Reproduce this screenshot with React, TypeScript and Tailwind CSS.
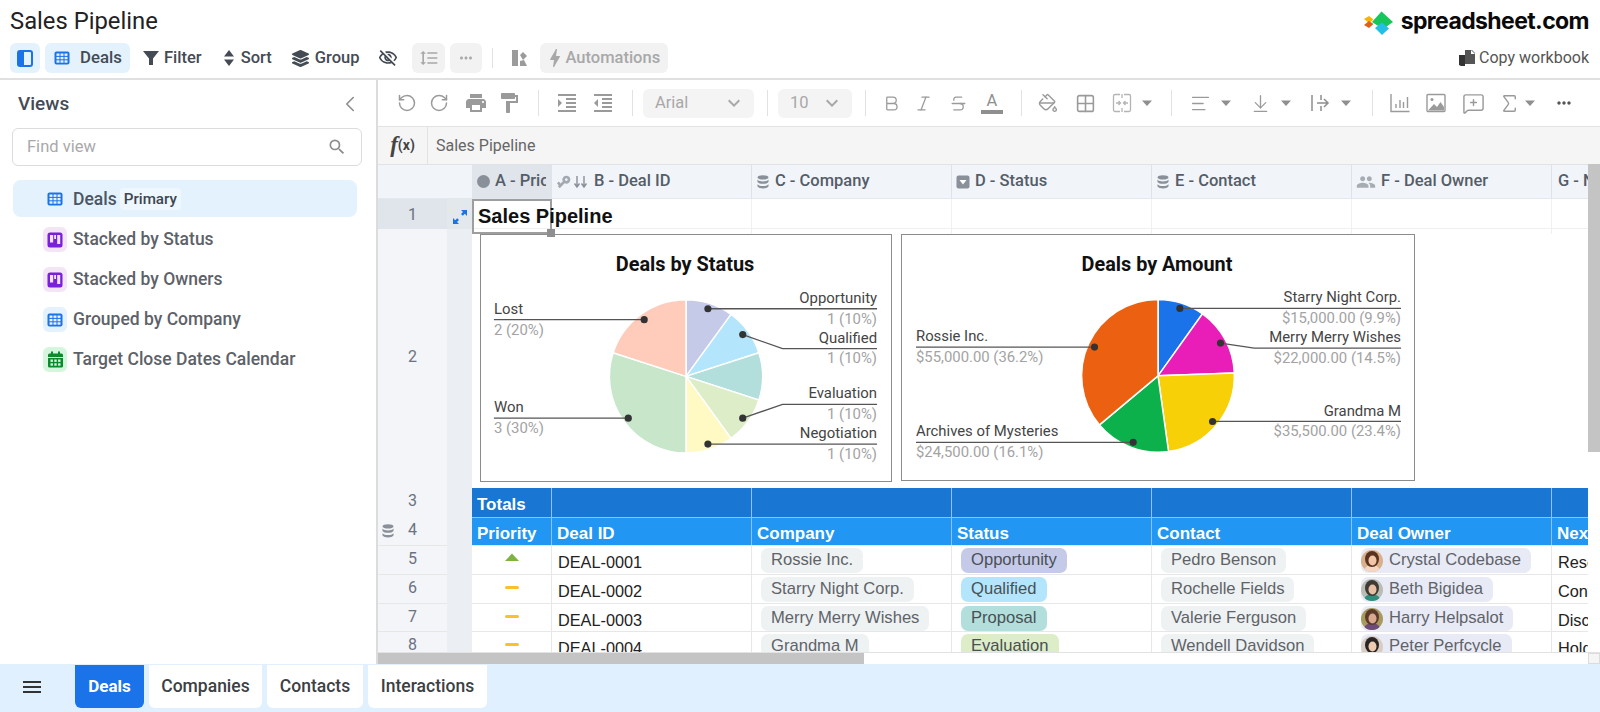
import React from "react";
import {
  MdPrint, MdFormatPaint, MdFormatIndentIncrease, MdFormatIndentDecrease,
  MdMoreHoriz, MdFormatLineSpacing, MdBolt, MdOutlineVisibilityOff, MdSearch,
  MdKeyboardArrowDown, MdMenu, MdVpnKey, MdPeople,
} from "react-icons/md";
import { FaLayerGroup } from "react-icons/fa";
import {
  RotateCcw, RotateCw, Bold, Italic, Strikethrough, PaintBucket, Grid2x2, AlignLeft,
  ArrowDownToLine, MessageSquarePlus, Sigma, ChevronLeft,
} from "lucide-react";

const roboto = "[font-family:Roboto,sans-serif]";
const arial = "[font-family:'Liberation_Sans',Arial,sans-serif]";

function GridGlyph({ color = "#1a73e8", size = 16 }: { color?: string; size?: number }) {
  return (
    <svg width={size} height={size} viewBox="0 0 16 16">
      <rect x="0.5" y="1.5" width="15" height="13" rx="2" fill={color} />
      <g fill="#fff" opacity="0.9">
        <rect x="2.5" y="3.5" width="3" height="2.4" />
        <rect x="6.5" y="3.5" width="3" height="2.4" />
        <rect x="10.5" y="3.5" width="3" height="2.4" />
        <rect x="2.5" y="6.9" width="3" height="2.4" />
        <rect x="6.5" y="6.9" width="3" height="2.4" />
        <rect x="10.5" y="6.9" width="3" height="2.4" />
        <rect x="2.5" y="10.3" width="3" height="2.4" />
        <rect x="6.5" y="10.3" width="3" height="2.4" />
        <rect x="10.5" y="10.3" width="3" height="2.4" />
      </g>
    </svg>
  );
}

function KanbanGlyph() {
  return (
    <svg width="16" height="16" viewBox="0 0 16 16">
      <rect x="0.5" y="0.5" width="15" height="15" rx="2.5" fill="#7b1fd8" />
      <rect x="3" y="3" width="3.2" height="7.5" fill="#f3e5f5" />
      <rect x="7.2" y="3" width="1.8" height="4" fill="#f3e5f5" />
      <rect x="10.2" y="3" width="3" height="9" fill="#f3e5f5" />
    </svg>
  );
}

function CalendarGlyph() {
  return (
    <svg width="17" height="17" viewBox="0 0 17 17">
      <rect x="1" y="2.5" width="15" height="14" rx="1.5" fill="#0b8a2e" />
      <rect x="4" y="0.5" width="2" height="4" fill="#0b8a2e" />
      <rect x="11" y="0.5" width="2" height="4" fill="#0b8a2e" />
      <rect x="1" y="6" width="15" height="1" fill="#c8f5d0" />
      <g fill="#d4f7da">
        <rect x="3.5" y="8.5" width="2.4" height="2.4" />
        <rect x="7.3" y="8.5" width="2.4" height="2.4" />
        <rect x="11.1" y="8.5" width="2.4" height="2.4" />
        <rect x="3.5" y="12.3" width="2.4" height="2.4" />
        <rect x="7.3" y="12.3" width="2.4" height="2.4" />
        <rect x="11.1" y="12.3" width="2.4" height="2.4" />
      </g>
    </svg>
  );
}

function DbGlyph({ className = "" }: { className?: string }) {
  return (
    <svg width="12" height="14" viewBox="0 0 12 14" className={className}>
      <g fill="#8a9099">
        <ellipse cx="6" cy="2.4" rx="5.5" ry="2.2" />
        <path d="M0.5 4.6c1 1.4 3 1.9 5.5 1.9s4.5-.5 5.5-1.9v2.3c-.8 1.3-3 1.9-5.5 1.9S1.3 8.2.5 6.9z" />
        <path d="M0.5 9.2c1 1.3 3 1.8 5.5 1.8s4.5-.5 5.5-1.8v2.4c-.8 1.2-3 1.9-5.5 1.9s-4.7-.7-5.5-1.9z" />
      </g>
    </svg>
  );
}

function Logo() {
  return (
    <svg width="30" height="26" viewBox="0 0 30 26">
      <path d="M8 13 L17.5 2.5 L29 13 L19 20z" fill="#16c65a" />
      <path d="M11 19 L18 13.5 L25 19.5 L18 26z" fill="#25bfe6" />
      <path d="M0 10 L5 7 L9.5 10.5 L5 14z" fill="#f8b400" />
      <path d="M0 16 L5 12 L9.5 15 L5 19z" fill="#e0601a" />
    </svg>
  );
}

const Sep = ({ className }: { className: string }) => <div className={`w-px h-[26px] bg-[#e2e2e2] shrink-0 ${className}`} />;
const Caret = ({ className }: { className: string }) => (
  <svg width="12" height="8" viewBox="0 0 12 8" className={`shrink-0 ${className}`}>
    <path d="M1 1.5h10L6 7z" fill="#8f8f8f" />
  </svg>
);

function Head({ children, className = "" }: { children: React.ReactNode; className?: string }) {
  return (
    <div className={`h-full flex items-center border-r border-[#dde3ea] overflow-hidden whitespace-nowrap text-[#555d68] font-medium text-[16.5px] ${className}`}>
      {children}
    </div>
  );
}

function TableHead() {
  return (
    <div className={`grid grid-cols-[69px_25px_80px_200px_200px_200px_200px_200px_36px] h-[35px] shrink-0 bg-[#f1f5f9] border-b border-[#e3e8ee] border-t border-t-[#dfe3e8] ${roboto}`}>
      <div />
      <div />
      <Head className="bg-[#dfe5ea] pl-[5px]">
        <span className="w-[13px] h-[13px] rounded-full bg-[#8a9099] mr-[5px] shrink-0" />
        <span className="overflow-hidden mr-[5px]">A - Priority</span>
      </Head>
      <Head className="pl-[4px]">
        <MdVpnKey className="text-[#a3a9b0] text-[16px] mr-[1px] rotate-[135deg]" />
        <svg width="16" height="14" viewBox="0 0 16 14" className="mr-[5px]">
          <path d="M4 1v10M1.5 8.5 4 12l2.5-3.5M11 1v10M8.5 8.5 11 12l2.5-3.5" stroke="#8a9099" strokeWidth="1.4" fill="none" />
        </svg>
        B - Deal ID
      </Head>
      <Head className="pl-[5px]"><DbGlyph className="mr-[6px]" />C - Company</Head>
      <Head className="pl-[4px]">
        <svg width="14" height="14" viewBox="0 0 14 14" className="mr-[5px]">
          <rect x="0.5" y="0.5" width="13" height="13" rx="2" fill="#8a9099" />
          <path d="M3.5 5h7L7 9.5z" fill="#fff" />
        </svg>
        D - Status
      </Head>
      <Head className="pl-[5px]"><DbGlyph className="mr-[6px]" />E - Contact</Head>
      <Head className="pl-[4px]"><MdPeople className="text-[#a6acb4] text-[20px] mr-[5px]" />F - Deal Owner</Head>
      <Head className="border-r-0 pl-[6px]">G - Next Step</Head>
    </div>
  );
}

function Pill({ children, className }: { children: React.ReactNode; className: string }) {
  return (
    <span className={`inline-flex h-[25px] mt-[2px] items-center rounded-[7px] px-[10px] whitespace-nowrap text-[16.6px] leading-none text-[#5f6368] ${className}`}>
      {children}
    </span>
  );
}

function Face({ skin, hair, bg, shirt }: { skin: string; hair: string; bg: string; shirt: string }) {
  return (
    <svg width="22" height="22" viewBox="0 0 22 22" className="shrink-0 rounded-full mr-[6px] -ml-[10px]">
      <rect width="22" height="22" fill={bg} />
      <path d="M3 22c0-5 4-7 8-7s8 2 8 7z" fill={shirt} />
      <ellipse cx="11" cy="9" rx="7" ry="8" fill={hair} />
      <ellipse cx="11.5" cy="10.5" rx="4" ry="5" fill={skin} />
    </svg>
  );
}

const rows = [
  { n: 5, deal: "DEAL-0001", company: "Rossie Inc.", status: "Opportunity", sc: "bg-[#c5cae9]", contact: "Pedro Benson", owner: "Crystal Codebase", next: "Research", up: true, face: { skin: "#f1c6a8", hair: "#5a3320", bg: "#d9b08c", shirt: "#f4d7c2" } },
  { n: 6, deal: "DEAL-0002", company: "Starry Night Corp.", status: "Qualified", sc: "bg-[#b3e5fc]", contact: "Rochelle Fields", owner: "Beth Bigidea", next: "Contact", up: false, face: { skin: "#e6bfa5", hair: "#3f3a35", bg: "#b9bdb6", shirt: "#2f8f7f" } },
  { n: 7, deal: "DEAL-0003", company: "Merry Merry Wishes", status: "Proposal", sc: "bg-[#b2dfdb]", contact: "Valerie Ferguson", owner: "Harry Helpsalot", next: "Discuss", up: false, face: { skin: "#d9a890", hair: "#5b3a2b", bg: "#a89a5e", shirt: "#6d4b7b" } },
  { n: 8, deal: "DEAL-0004", company: "Grandma M", status: "Evaluation", sc: "bg-[#dcedc8]", contact: "Wendell Davidson", owner: "Peter Perfcycle", next: "Hold", up: false, face: { skin: "#eccbb0", hair: "#2a2422", bg: "#d8cdc5", shirt: "#333333" } },
];

function Slice({ cx, cy, r, from, to, fill }: { cx: number; cy: number; r: number; from: number; to: number; fill: string }) {
  const p = (f: number) => {
    const a = f * 2 * Math.PI - Math.PI / 2;
    return `${cx + r * Math.cos(a)} ${cy + r * Math.sin(a)}`;
  };
  const large = to - from > 0.5 ? 1 : 0;
  return <path d={`M${cx} ${cy}L${p(from)}A${r} ${r} 0 ${large} 1 ${p(to)}Z`} fill={fill} stroke="#fff" strokeWidth="1.5" />;
}

type Label = { name: string; value: string; x: number; end: boolean; y: number; line: string; dot: [number, number] };

function Pie({ title, viewBox, width, height, cx, slices, labels, titleX }: {
  title: string; viewBox: string; width: number; height: number; cx: number; titleX: number;
  slices: [number, string][]; labels: Label[];
}) {
  let acc = 0;
  return (
    <div className="bg-white border border-[#8c8c8c] shrink-0" style={{ width, height }}>
      <svg width="100%" height="100%" viewBox={viewBox} className={roboto}>
        <text x={titleX} y="270" textAnchor="middle" fontSize="20" fontWeight="700" fill="#111">{title}</text>
        {slices.map(([v, c], i) => {
          const from = acc;
          acc += v;
          return <Slice key={i} cx={cx} cy={376} r={77} from={from} to={acc} fill={c} />;
        })}
        {labels.map((l) => (
          <g key={l.name}>
            <polyline points={l.line} fill="none" stroke="#555" strokeWidth="1.3" />
            <circle cx={l.dot[0]} cy={l.dot[1]} r="3.6" fill="#333" />
            <text x={l.x} y={l.y - 6} textAnchor={l.end ? "end" : "start"} fontSize="15" fill="#444">{l.name}</text>
            <text x={l.x} y={l.y + 15} textAnchor={l.end ? "end" : "start"} fontSize="15" fill="#a3a3a3">{l.value}</text>
          </g>
        ))}
      </svg>
    </div>
  );
}

const statusLabels: Label[] = [
  { name: "Lost", value: "2 (20%)", x: 493, end: false, y: 319, line: "493,319 644,319", dot: [644, 319] },
  { name: "Won", value: "3 (30%)", x: 493, end: false, y: 418, line: "493,418 628,418", dot: [628, 418] },
  { name: "Opportunity", value: "1 (10%)", x: 878, end: true, y: 308, line: "878,308 708,308", dot: [708, 308] },
  { name: "Qualified", value: "1 (10%)", x: 878, end: true, y: 348, line: "878,348 783,348 743,334", dot: [743, 334] },
  { name: "Evaluation", value: "1 (10%)", x: 878, end: true, y: 404, line: "878,404 783,404 743,418", dot: [743, 418] },
  { name: "Negotiation", value: "1 (10%)", x: 878, end: true, y: 444, line: "878,444 708,444", dot: [708, 444] },
];
const amountLabels: Label[] = [
  { name: "Starry Night Corp.", value: "$15,000.00 (9.9%)", x: 1403, end: true, y: 308, line: "1403,308 1180,308", dot: [1180, 308] },
  { name: "Merry Merry Wishes", value: "$22,000.00 (14.5%)", x: 1403, end: true, y: 348, line: "1403,348 1255,348 1221,343", dot: [1221, 343] },
  { name: "Grandma M", value: "$35,500.00 (23.4%)", x: 1403, end: true, y: 422, line: "1403,422 1213,422", dot: [1213, 422] },
  { name: "Rossie Inc.", value: "$55,000.00 (36.2%)", x: 914, end: false, y: 347, line: "914,347 1094,347", dot: [1094, 347] },
  { name: "Archives of Mysteries", value: "$24,500.00 (16.1%)", x: 914, end: false, y: 443, line: "914,443 1133,443", dot: [1133, 443] },
];

const colsClass = "grid grid-cols-[69px_25px_80px_200px_200px_200px_200px_200px_36px] shrink-0";
const numBase = `flex justify-center text-[16px] text-[#6b7280] ${roboto}`;
const numCell = `${numBase} items-start pt-px bg-[#f3f5f8]`;
const gutter = "bg-[#ebeff3]";
const bandCell = "border-r border-[#8ec2f0] h-full";
const blueText = `flex items-center pl-[5px] pt-[5px] overflow-hidden whitespace-nowrap text-white font-bold text-[17px] ${arial}`;

export default function App() {
  return (
    <div className={`w-[1600px] h-[712px] flex flex-col overflow-hidden bg-white ${roboto}`}>
      {/* top bar */}
      <header className="h-[80px] shrink-0 border-b-2 border-[#e0e0e0] flex flex-col">
        <div className="h-[43px] flex items-center justify-between pl-[10px] pr-[11px]">
          <h1 className="text-[23.8px] text-[#222] font-normal leading-none">Sales Pipeline</h1>
          <div className="flex items-center gap-[7px]">
            <Logo />
            <span className="[font-family:Inter,sans-serif] font-bold text-[23px] tracking-[-0.6px] text-[#0a0a0a] leading-none">spreadsheet.com</span>
          </div>
        </div>
        <div className="h-[30px] flex items-center pl-[10px] pr-[11px] text-[16.5px] font-medium text-[#444b55]">
          <button className="w-[30px] h-[30px] rounded-md bg-[#e3f2fd] flex items-center justify-center">
            <svg width="16" height="17" viewBox="0 0 16 17">
              <rect x="1" y="1" width="14" height="15" rx="2" fill="none" stroke="#1a73e8" strokeWidth="2" />
              <rect x="1" y="1" width="6" height="15" rx="1" fill="#1a73e8" />
            </svg>
          </button>
          <button className="w-[85px] h-[30px] ml-[5px] rounded-md bg-[#e3f2fd] flex items-center pl-[9px] gap-[10px] text-[16.8px]">
            <GridGlyph size={16} /> Deals
          </button>
          <svg width="16" height="16" viewBox="0 0 16 16" className="ml-[13px]"><path d="M0 1h16l-6 7.5V15H6V8.5z" fill="#444b55" /></svg>
          <span className="ml-[5px]">Filter</span>
          <svg width="12" height="18" viewBox="0 0 12 18" className="ml-[21px]"><path d="M6 1l5 6.5H1zM6 17l5-6.5H1z" fill="#444b55" /></svg>
          <span className="ml-[6px]">Sort</span>
          <FaLayerGroup className="ml-[20px] text-[17px] text-[#444b55]" />
          <span className="ml-[6px]">Group</span>
          <MdOutlineVisibilityOff className="ml-[19px] text-[20px] text-[#444b55]" />
          <button className="ml-[14px] w-[33px] h-[30px] rounded-md bg-[#f2f2f2] flex items-center justify-center"><MdFormatLineSpacing className="text-[20px] text-[#a8a8a8]" /></button>
          <button className="ml-[5px] w-[32px] h-[30px] rounded-md bg-[#f2f2f2] flex items-center justify-center"><MdMoreHoriz className="text-[18px] text-[#a8a8a8]" /></button>
          <div className="ml-[10px] w-px h-[20px] bg-[#e2e2e2]" />
          <svg width="17" height="18" viewBox="0 0 17 18" className="ml-[18px]">
            <path d="M1 1h6v16H1z" fill="#9b9b9b" />
            <path d="M9 6l3-3 4 4-4 4zM9 17v-5l4-1 3 6z" fill="#9b9b9b" />
          </svg>
          <button className="ml-[12px] w-[128px] h-[30px] rounded-md bg-[#f2f2f2] flex items-center pl-[3px] text-[#a8a8a8] text-[16.5px]">
            <MdBolt className="text-[24px] -mr-[2px]" /> Automations
          </button>
          <div className="ml-auto flex items-center text-[#555] font-normal text-[16px] gap-[3px]">
            <svg width="18" height="18" viewBox="0 0 18 18">
              <path d="M1 6h6v11H3l-2-1z" fill="#333" />
              <path d="M7 1h7l3 3v11H7z" fill="#555" />
              <path d="M13 1v4h4z" fill="#fff" />
            </svg>
            Copy workbook
          </div>
        </div>
      </header>

      <div className="flex-1 min-h-0 flex">
        {/* sidebar */}
        <aside className="w-[376px] shrink-0 flex flex-col">
          <div className="h-[46px] pt-[2px] flex items-center justify-between pl-[18px] pr-[13px]">
            <span className="text-[19px] font-medium text-[#444b55]">Views</span>
            <ChevronLeft size={26} strokeWidth={1.5} className="text-[#8d8d8d]" />
          </div>
          <div className="ml-[12px] mr-[14px] mt-[2px] h-[38px] border border-[#dcdcdc] rounded-md flex items-center justify-between px-[14px] text-[16.5px] text-[#a9a9a9]">
            Find view
            <MdSearch className="text-[20px] text-[#8d8d8d]" />
          </div>
          <nav className="mt-[14px] mx-[13px] flex flex-col gap-[3px] text-[17.5px] font-medium text-[#5d6168]">
            <div className="h-[37px] w-[344px] rounded-lg bg-[#e3f2fd] flex items-center pl-[30px] pt-px mb-px">
              <span className="w-[24px] flex justify-center mr-[6px]"><GridGlyph /></span>
              <span className="text-[#4b5563]">Deals</span>
              <span className="ml-[3px] px-[4px] h-[22px] rounded bg-[#eef7fe] flex items-center text-[15.2px] text-[#3d4550]">Primary</span>
            </div>
            {[
              { t: "Stacked by Status", bg: "bg-[#f3e5f5]", g: <KanbanGlyph /> },
              { t: "Stacked by Owners", bg: "bg-[#f3e5f5]", g: <KanbanGlyph /> },
              { t: "Grouped by Company", bg: "bg-[#e3f2fd]", g: <GridGlyph /> },
              { t: "Target Close Dates Calendar", bg: "bg-[#d5f5dc]", g: <CalendarGlyph /> },
            ].map((v) => (
              <div key={v.t} className="h-[37px] flex items-center pl-[30px]">
                <span className={`w-[24px] h-[25px] rounded-md flex items-center justify-center mr-[6px] ${v.bg}`}>{v.g}</span>
                {v.t}
              </div>
            ))}
          </nav>
        </aside>

        {/* sheet */}
        <main className="flex-1 min-w-0 flex flex-col border-l-2 border-[#dcdcdc]">
          <div className="h-[47px] shrink-0 flex items-center border-b border-[#e2e2e2] text-[#9a9a9a] [&>svg]:shrink-0">
            <span className="ml-[17px] w-[24px] flex justify-center"><RotateCcw size={20} strokeWidth={1.8} /></span>
            <span className="ml-[8px] w-[24px] flex justify-center"><RotateCw size={20} strokeWidth={1.8} /></span>
            <MdPrint className="ml-[13px] text-[24px]" />
            <MdFormatPaint className="ml-[9px] text-[24px]" />
            <Sep className="ml-[17px]" />
            <MdFormatIndentIncrease className="ml-[16px] text-[24px]" />
            <MdFormatIndentDecrease className="ml-[12px] text-[24px]" />
            <Sep className="ml-[17px]" />
            <div className="ml-[10px] w-[111px] h-[29px] rounded-md bg-[#f4f4f4] flex items-center justify-between pl-[12px] pr-[8px] text-[#a8a8a8] text-[16.5px]">
              Arial <MdKeyboardArrowDown className="text-[24px]" />
            </div>
            <Sep className="ml-[13px]" />
            <div className="ml-[10px] w-[74px] h-[29px] rounded-md bg-[#f4f4f4] flex items-center justify-between pl-[12px] pr-[8px] text-[#a8a8a8] text-[16.5px]">
              10 <MdKeyboardArrowDown className="text-[24px]" />
            </div>
            <Sep className="ml-[13px]" />
            <span className="ml-[13px] w-[24px] flex justify-center"><Bold size={19} strokeWidth={1.6} /></span>
            <span className="ml-[8px] w-[24px] flex justify-center"><Italic size={19} strokeWidth={1.6} /></span>
            <span className="ml-[11px] w-[24px] flex justify-center"><Strikethrough size={19} strokeWidth={1.6} /></span>
            <span className="ml-[10px] w-[24px] flex flex-col items-center text-[16.5px] leading-[18px] text-[#8f8f8f]">
              A
              <span className="w-[22px] h-[4px] bg-[#8f8f8f]" />
            </span>
            <Sep className="ml-[17px]" />
            <span className="ml-[14px] w-[24px] flex justify-center"><PaintBucket size={20} strokeWidth={1.7} /></span>
            <span className="ml-[13px] w-[24px] flex justify-center"><Grid2x2 size={21} strokeWidth={1.8} /></span>
            <svg width="24" height="24" viewBox="0 0 24 24" className="ml-[13px]" fill="none" stroke="#b4b4b4" strokeWidth="1.3">
              <path d="M10 3.5H5a1.5 1.5 0 0 0-1.5 1.5v14A1.5 1.5 0 0 0 5 20.5h5M14 3.5h5A1.5 1.5 0 0 1 20.5 5v14a1.5 1.5 0 0 1-1.5 1.5h-5M12 3v4M12 17v4M6 12h4.5M8.5 10l2 2-2 2M18 12h-4.5M15.5 10l-2 2 2 2" />
            </svg>
            <Caret className="ml-[7px]" />
            <Sep className="ml-[18px]" />
            <span className="ml-[16px] w-[24px] flex justify-center"><AlignLeft size={21} strokeWidth={1.5} /></span>
            <Caret className="ml-[8px]" />
            <span className="ml-[16px] w-[24px] flex justify-center"><ArrowDownToLine size={21} strokeWidth={1.5} /></span>
            <Caret className="ml-[8px]" />
            <svg width="24" height="24" viewBox="0 0 24 24" className="ml-[16px]" fill="none" stroke="#8f8f8f" strokeWidth="1.5">
              <path d="M4 4v16M9 12h11M16 8l4 4-4 4M13 4v5M13 15v5" />
            </svg>
            <Caret className="ml-[8px]" />
            <Sep className="ml-[20px]" />
            <svg width="24" height="24" viewBox="0 0 24 24" className="ml-[15px]" fill="none" stroke="#9a9a9a" strokeWidth="1.4">
              <path d="M3 3v17.5h18.5M8 17v-4M12 17V9M15.5 17v-6M19.5 17V6" />
            </svg>
            <svg width="24" height="24" viewBox="0 0 24 24" className="ml-[12px]">
              <rect x="3" y="3.5" width="18" height="17" rx="1" fill="none" stroke="#9a9a9a" strokeWidth="1.4" />
              <circle cx="8" cy="8.5" r="1.5" fill="#9a9a9a" />
              <path d="M4 19.5 10 13l3 3 3.5-5 3.5 5v3.5z" fill="#9a9a9a" />
            </svg>
            <span className="ml-[13px] w-[24px] flex justify-center"><MessageSquarePlus size={23} strokeWidth={1.5} /></span>
            <span className="ml-[12px] w-[24px] flex justify-center"><Sigma size={23} strokeWidth={1.5} /></span>
            <Caret className="ml-[3px]" />
            <MdMoreHoriz className="ml-[18px] text-[20px] text-[#555]" />
          </div>

          <div className="h-[37px] shrink-0 flex items-center bg-[#f5f5f5]">
            <div className="w-[50px] h-full flex items-center justify-center border-r border-[#e2e2e2] [font-family:'Liberation_Serif',serif] italic font-bold text-[23px] text-[#444]">
              f<span className="[font-family:Roboto,sans-serif] not-italic text-[14px]">(x)</span>
            </div>
            <span className="ml-[8px] text-[16px] text-[#666]">Sales Pipeline</span>
          </div>

          <div className="flex-1 min-h-0 flex">
            <div className="w-[1210px] flex flex-col overflow-hidden">
              <TableHead />
              {/* row 1 */}
              <div className={`${colsClass} h-[30px] border-b border-[#f0f0f0]`}>
                <div className={`${numBase} items-center pb-[3px] bg-[#dfe5ea]`}>1</div>
                <div className="bg-[#e3e8ec] flex items-center justify-center">
                  <svg width="16" height="16" viewBox="0 0 16 16" fill="#1a73e8">
                    <path d="M9 1h6v6l-2.2-2.2-2 2L9 5l2-2zM7 15H1V9l2.2 2.2 2-2L7 11l-2 2z" />
                  </svg>
                </div>
                <div className={`relative border-2 border-[#9e9e9e] whitespace-nowrap pl-[4px] pb-px flex items-center font-bold text-[20px] text-[#111] ${arial}`}>
                  Sales Pipeline
                  <span className="absolute -right-[5px] -bottom-[5px] w-[8px] h-[8px] bg-[#8f8f8f]" />
                </div>
                <div className="border-r border-[#f0f0f0]" />
                <div className="border-r border-[#f0f0f0]" />
                <div className="border-r border-[#f0f0f0]" />
                <div className="border-r border-[#f0f0f0]" />
                <div className="border-r border-[#f0f0f0]" />
                <div />
              </div>
              {/* row 2 */}
              <div className={`${colsClass} h-[259px]`}>
                <div className={`${numBase} items-center pb-[4px] bg-[#f3f5f8]`}>2</div>
                <div className={gutter} />
                <div className="col-span-7 flex gap-[9px] pl-[8px] pt-[5px]">
                  <Pie
                    title="Deals by Status" viewBox="480 234 412 247" width={412} height={248} cx={686} titleX={685}
                    slices={[[0.1, "#c5cae9"], [0.1, "#b3e5fc"], [0.1, "#b2dfdb"], [0.1, "#dcedc8"], [0.1, "#fff9c4"], [0.3, "#c8e6c9"], [0.2, "#ffccbc"]]}
                    labels={statusLabels}
                  />
                  <Pie
                    title="Deals by Amount" viewBox="901 234 514 247" width={514} height={247} cx={1158} titleX={1157}
                    slices={[[0.099, "#1a73e8"], [0.145, "#e91eb8"], [0.234, "#f7d008"], [0.161, "#0db14b"], [0.361, "#ec6111"]]}
                    labels={amountLabels}
                  />
                </div>
              </div>
              {/* row 3 */}
              <div className={`${colsClass} h-[29px]`}>
                <div className={numCell}>3</div>
                <div className={gutter} />
                <div className={`${bandCell} bg-[#1976d2] ${blueText}`}>Totals</div>
                {[0, 1, 2, 3, 4].map((i) => <div key={i} className={`${bandCell} bg-[#1976d2]`} />)}
                <div className="bg-[#1976d2]" />
              </div>
              {/* row 4 */}
              <div className={`${colsClass} h-[28px]`}>
                <div className={`${numCell} relative`}>
                  <DbGlyph className="absolute left-[4px] top-[7px]" />
                  4
                </div>
                <div className={gutter} />
                {["Priority", "Deal ID", "Company", "Status", "Contact", "Deal Owner", "Next Step"].map((h, i) => (
                  <div key={h} className={`bg-[#2196f3] border-t border-[#8ec2f0] ${blueText} ${i < 6 ? "border-r" : ""}`}>{h}</div>
                ))}
              </div>
              {/* data rows */}
              {rows.map((r, idx) => (
                <div key={r.n} className={`${colsClass} ${idx === 3 ? "h-[21px]" : idx === 0 ? "h-[29px]" : idx === 1 ? "h-[29px]" : "h-[28px]"} overflow-hidden ${arial}`}>
                  <div className={`${numCell} border-t border-[#e7e7e7]`}>{r.n}</div>
                  <div className={gutter} />
                  <div className="border-t border-r border-[#e7e7e7] flex justify-center pt-[7px]">
                    {r.up ? (
                      <svg width="16" height="8" viewBox="0 0 16 8"><path d="M8 0.5 15 8H1z" fill="#7cb342" /></svg>
                    ) : (
                      <span className="mt-[4px] w-[14px] h-[3px] rounded-sm bg-[#fbc02d]" />
                    )}
                  </div>
                  <div className="border-t border-r border-[#e7e7e7] pl-[6px] pt-[6px] text-[16.3px] leading-[20px] text-[#222]">{r.deal}</div>
                  <div className="border-t border-r border-[#e7e7e7] pl-[9px]"><Pill className="bg-[#eef2f3]">{r.company}</Pill></div>
                  <div className="border-t border-r border-[#e7e7e7] pl-[9px]"><Pill className={`${r.sc} !text-[#4a4f55]`}>{r.status}</Pill></div>
                  <div className="border-t border-r border-[#e7e7e7] pl-[9px]"><Pill className="bg-[#eef2f3]">{r.contact}</Pill></div>
                  <div className="border-t border-r border-[#e7e7e7] pl-[9px]">
                    <Pill className="bg-[#e8eaf6] pr-[10px]"><Face {...r.face} />{r.owner}</Pill>
                  </div>
                  <div className="border-t border-[#e7e7e7] pl-[6px] pt-[6px] text-[16.3px] leading-[20px] text-[#222] overflow-hidden whitespace-nowrap">{r.next}</div>
                </div>
              ))}
            </div>
            <div className="w-[12px] shrink-0 bg-white">
              <div className="h-[288px] bg-[#c4c4c4]" />
            </div>
          </div>

          <div className="h-[12px] shrink-0 flex border-t border-[#e2e2e2]">
            <div className="w-[486px] bg-[#c4c4c4]" />
            <div className="flex-1" />
            <div className="w-[12px] bg-[#f5f5f5] border border-[#dcdcdc]" />
          </div>
        </main>
      </div>

      {/* tabs */}
      <footer className="h-[48px] shrink-0 bg-[#e0f0fe] flex items-start pt-px">
        <MdMenu className="ml-[20px] mt-[10px] text-[24px] text-[#333]" />
        <div className="ml-[31px] flex gap-[5px] text-[17.5px] font-medium text-[#3c4043]">
          <button className="w-[69px] h-[43px] rounded-b-md bg-[#1a73e8] text-white font-bold text-[17px]">Deals</button>
          <button className="w-[113px] h-[43px] rounded-b-md bg-white">Companies</button>
          <button className="w-[96px] h-[43px] rounded-b-md bg-white">Contacts</button>
          <button className="w-[119px] h-[43px] rounded-b-md bg-white">Interactions</button>
        </div>
      </footer>
    </div>
  );
}
